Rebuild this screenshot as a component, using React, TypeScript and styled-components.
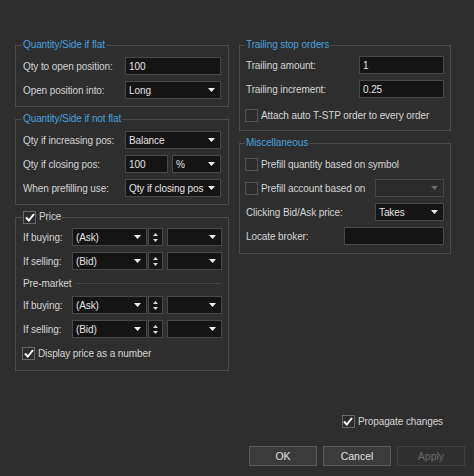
import React from "react";
import styled, {createGlobalStyle} from "styled-components";

const GlobalStyle = createGlobalStyle`
    html, body{
        margin: 0;
        padding: 0;
        background: #2e2e2e;
    }
    body{
        font-family: "Liberation Sans", Arial, sans-serif;
        font-size: 10px;
        letter-spacing: -0.1px;
        color: #d6d6d6;
    }
`

const Window = styled.div`
    width: 474px;
    height: 476px;
    box-sizing: border-box;
    padding-top: 39px;
    display: flex;
    flex-direction: column;
    background: #2e2e2e;
`

const Columns = styled.div`
    display: grid;
    grid-template-columns: 214px 212px;
    column-gap: 10px;
    padding-left: 15px;
    align-items: start;
`

const Column = styled.div`
    display: flex;
    flex-direction: column;
    gap: 6px;
`

const Group = styled.fieldset<{$pad?: string}>`
    margin: 0;
    min-width: 0;
    border: 1px solid #4b4b4b;
    padding: ${p => p.$pad || "6px 7px 7px 7px"};
    display: flex;
    flex-direction: column;
    gap: 6px;
`

const Legend = styled.legend`
    padding: 0 1px;
    margin-left: -1px;
    line-height: 12px;
    height: 12px;
    color: #4aa0dc;
    display: flex;
    align-items: center;
    gap: 3px;
`

const Row = styled.div<{$cols: string}>`
    display: grid;
    grid-template-columns: ${p => p.$cols};
    align-items: center;
    height: 18px;
`

const Fields = styled.div<{$gap?: number}>`
    display: flex;
    align-items: center;
    gap: ${p => p.$gap ?? 4}px;
    height: 18px;
`

const Label = styled.span`
    white-space: nowrap;
    color: #d4d4d4;
`

const TextBox = styled.div<{$w?: number}>`
    box-sizing: border-box;
    height: 18px;
    width: ${p => (p.$w ? `${p.$w}px` : "100%")};
    background: #141414;
    border: 1px solid #484848;
    padding: 0 3px;
    display: flex;
    align-items: center;
    color: #e4e4e4;
    white-space: nowrap;
    overflow: hidden;
`

const SelectBox = styled(TextBox)<{$disabled?: boolean}>`
    justify-content: space-between;
    gap: 3px;
    padding-right: 5px;
    background: ${p => (p.$disabled ? "#2b2b2b" : "#141414")};
    border-color: ${p => (p.$disabled ? "#474747" : "#484848")};
    svg{
        flex: none;
    }
`

const SpinBox = styled.div`
    box-sizing: border-box;
    width: 15px;
    height: 18px;
    background: #141414;
    border: 1px solid #484848;
    display: flex;
    flex-direction: column;
    align-items: center;
    justify-content: center;
    gap: 3px;
`

const CheckRow = styled.label<{$shift?: number}>`
    display: flex;
    align-items: center;
    gap: 3px;
    height: 18px;
    margin-top: ${p => p.$shift ?? 0}px;
    margin-left: -1px;
    white-space: nowrap;
`

const Box = styled.span<{$checked?: boolean}>`
    box-sizing: border-box;
    width: 13px;
    height: 13px;
    flex: none;
    border: 1px solid ${p => (p.$checked ? "#6a6a6a" : "#555555")};
    background: #2b2b2b;
    display: flex;
    align-items: center;
    justify-content: center;
`

const SubHeading = styled.div`
    display: flex;
    align-items: center;
    gap: 4px;
    height: 14px;
    &::after{
        content: "";
        flex: 1;
        height: 1px;
        background: #444444;
    }
`

const Footer = styled.div`
    margin-top: auto;
    padding: 0 9px 10px 0;
    display: flex;
    flex-direction: column;
    align-items: flex-end;
    gap: 18px;
`

const Propagate = styled(CheckRow)`
    height: 14px;
    margin-right: 22px;
`

const Buttons = styled.div`
    display: flex;
    gap: 6px;
`

const Button = styled.button<{$disabled?: boolean}>`
    width: 68px;
    height: 20px;
    padding: 0;
    font: inherit;
    font-size: 10.5px;
    background: ${p => (p.$disabled ? "#2f2f2f" : "#3b3b3b")};
    border: 1px solid ${p => (p.$disabled ? "#414141" : "#5b5b5b")};
    color: ${p => (p.$disabled ? "#6a6a6a" : "#e2e2e2")};
`

const Gap = styled.span`
    width: 2px;
`

const Arrow = ({color = "#f0f0f0"}: {color?: string}) => (
    <svg width="7" height="4" viewBox="0 0 7 4">
        <path d="M0 0h7L3.5 4z" fill={color}/>
    </svg>
)

const Spinner = () => (
    <SpinBox>
        <svg width="5" height="3" viewBox="0 0 5 3"><path d="M0 3h5L2.5 0z" fill="#d8d8d8"/></svg>
        <svg width="5" height="3" viewBox="0 0 5 3"><path d="M0 0h5L2.5 3z" fill="#d8d8d8"/></svg>
    </SpinBox>
)

const Check = ({checked}: {checked?: boolean}) => (
    <Box $checked={checked}>
        {checked && (
            <svg width="10" height="9" viewBox="0 0 10 9">
                <path d="M1 4.5l2.8 3L9 1" stroke="#ffffff" strokeWidth="2" fill="none"/>
            </svg>
        )}
    </Box>
)

const Select = ({value = "", w, disabled}: {value?: string; w?: number; disabled?: boolean}) => (
    <SelectBox $w={w} $disabled={disabled}>
        <span>{value}</span>
        <Arrow color={disabled ? "#6c6c6c" : "#f0f0f0"}/>
    </SelectBox>
)

const PriceRow = ({label, value}: {label: string; value: string}) => (
    <Row $cols="49px 1fr">
        <Label>{label}</Label>
        <Fields $gap={1}>
            <Select value={value} w={75}/>
            <Spinner/>
            <Gap/>
            <Select w={55}/>
        </Fields>
    </Row>
)

export default function App(){
    return (
        <>
            <GlobalStyle/>
            <Window>
                <Columns>
                    <Column>
                        <Group>
                            <Legend>Quantity/Side if flat</Legend>
                            <Row $cols="102px 1fr">
                                <Label>Qty to open position:</Label>
                                <TextBox>100</TextBox>
                            </Row>
                            <Row $cols="102px 1fr">
                                <Label>Open position into:</Label>
                                <Select value="Long"/>
                            </Row>
                        </Group>
                        <Group>
                            <Legend>Quantity/Side if not flat</Legend>
                            <Row $cols="102px 1fr">
                                <Label>Qty if increasing pos:</Label>
                                <Select value="Balance"/>
                            </Row>
                            <Row $cols="102px 1fr">
                                <Label>Qty if closing pos:</Label>
                                <Fields>
                                    <TextBox $w={43}>100</TextBox>
                                    <Select value="%" w={49}/>
                                </Fields>
                            </Row>
                            <Row $cols="102px 1fr">
                                <Label>When prefilling use:</Label>
                                <Select value="Qty if closing pos"/>
                            </Row>
                        </Group>
                        <Group $pad="5px 7px 8px 7px">
                            <Legend>
                                <Check checked/>
                                <Label>Price</Label>
                            </Legend>
                            <PriceRow label="If buying:" value="(Ask)"/>
                            <PriceRow label="If selling:" value="(Bid)"/>
                            <SubHeading>Pre-market</SubHeading>
                            <PriceRow label="If buying:" value="(Ask)"/>
                            <PriceRow label="If selling:" value="(Bid)"/>
                            <CheckRow>
                                <Check checked/>
                                Display price as a number
                            </CheckRow>
                        </Group>
                    </Column>
                    <Column>
                        <Group $pad="5px 6px 6px 6px">
                            <Legend>Trailing stop orders</Legend>
                            <Row $cols="113px 1fr">
                                <Label>Trailing amount:</Label>
                                <TextBox>1</TextBox>
                            </Row>
                            <Row $cols="113px 1fr">
                                <Label>Trailing increment:</Label>
                                <TextBox>0.25</TextBox>
                            </Row>
                            <CheckRow $shift={2}>
                                <Check/>
                                Attach auto T-STP order to every order
                            </CheckRow>
                        </Group>
                        <Group $pad="6px 6px 8px 6px">
                            <Legend>Miscellaneous</Legend>
                            <CheckRow>
                                <Check/>
                                Prefill quantity based on symbol
                            </CheckRow>
                            <Row $cols="129px 1fr">
                                <CheckRow>
                                    <Check/>
                                    Prefill account based on
                                </CheckRow>
                                <Select disabled/>
                            </Row>
                            <Row $cols="129px 1fr">
                                <Label>Clicking Bid/Ask price:</Label>
                                <Select value="Takes"/>
                            </Row>
                            <Row $cols="98px 1fr">
                                <Label>Locate broker:</Label>
                                <TextBox/>
                            </Row>
                        </Group>
                    </Column>
                </Columns>
                <Footer>
                    <Propagate>
                        <Check checked/>
                        Propagate changes
                    </Propagate>
                    <Buttons>
                        <Button>OK</Button>
                        <Button>Cancel</Button>
                        <Button $disabled>Apply</Button>
                    </Buttons>
                </Footer>
            </Window>
        </>
    )
}
